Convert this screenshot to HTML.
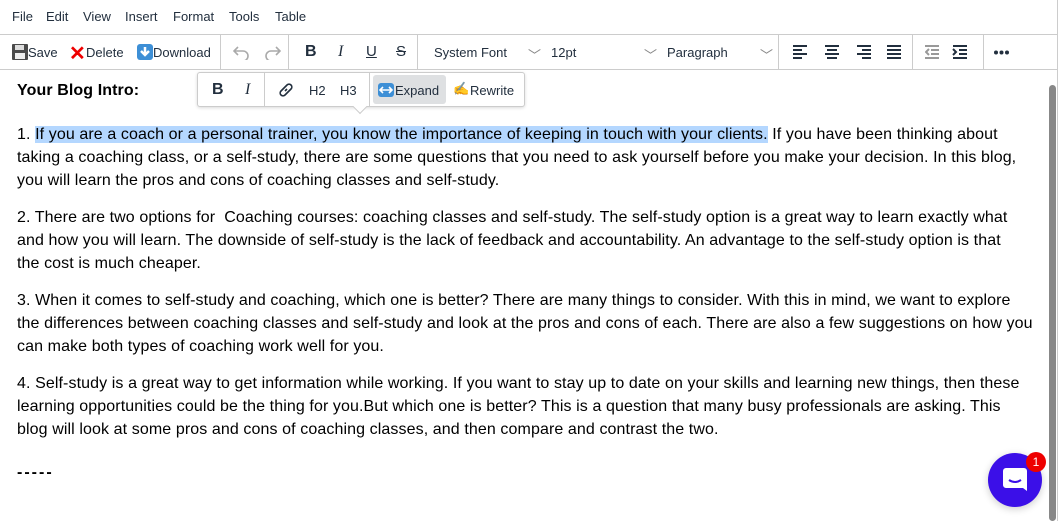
<!DOCTYPE html>
<html><head><style>
*{box-sizing:border-box;margin:0;padding:0}
body{width:1060px;height:521px;overflow:hidden;background:#fff;font-family:"Liberation Sans",Arial,sans-serif;color:#222f3e;position:relative}
.menu{position:absolute;top:0;left:0;width:1058px;height:35px;border-bottom:1px solid #ccc;font-size:13px}
.menu span{position:absolute;top:9px}
.tb{position:absolute;top:35px;left:0;width:1058px;height:35px;border-bottom:1px solid #ccc;font-size:13px}
.tb .t{position:absolute;top:10px}
.sep{position:absolute;top:0;width:1px;height:34px;background:#ccc}
.edge{position:absolute;top:0;right:2px;width:1px;height:521px;background:#ccc}
.content{position:absolute;top:79px;left:17px;width:1030px;font-size:16px;letter-spacing:0.1px;line-height:23px;color:#000;white-space:nowrap}
.content p{margin-bottom:14px}
.hl{background:#b4d7ff}
.pop{position:absolute;left:197px;top:72px;width:328px;height:35px;border:1px solid #ccc;border-radius:3px;background:#fff;box-shadow:0 1px 3px rgba(0,0,0,.15);font-size:13px}
.pop span{position:absolute;top:10px}
.scroll{position:absolute;left:1049px;top:85px;width:7px;height:436px;background:#888;border-radius:4px}
</style></head><body>
<div class="menu">
<span style="left:12px">File</span><span style="left:46px">Edit</span><span style="left:83px">View</span><span style="left:125px">Insert</span><span style="left:173px">Format</span><span style="left:229px">Tools</span><span style="left:275px">Table</span>
</div>
<div class="tb">
<svg style="position:absolute;left:12px;top:9px" width="16" height="16"><rect x="0" y="0" width="16" height="16" rx="1" fill="#4a4a4a"/><rect x="3" y="1" width="9" height="5" fill="#ddd"/><rect x="3" y="9" width="10" height="6" fill="#eee"/></svg>
<span class="t" style="left:28px">Save</span>
<span class="t" style="left:69px;top:6px;color:#e00;font-size:20px;font-weight:bold">✕</span>
<span class="t" style="left:86px">Delete</span>
<svg style="position:absolute;left:137px;top:9px" width="16" height="16"><rect width="16" height="16" rx="3" fill="#3d8fd6"/><path d="M8 3v7M4 7l4 4 4-4" stroke="#fff" stroke-width="2.5" fill="none"/></svg>
<span class="t" style="left:153px">Download</span>
<div class="sep" style="left:220px"></div>
<svg style="position:absolute;left:233px;top:9px" width="18" height="16"><path d="M5 3L1 7l4 4M1 7h9a5 5 0 010 10" stroke="#aaa" stroke-width="1.6" fill="none"/></svg>
<svg style="position:absolute;left:263px;top:9px" width="18" height="16"><path d="M13 3l4 4-4 4M17 7H8a5 5 0 000 10" stroke="#aaa" stroke-width="1.6" fill="none"/></svg>
<div class="sep" style="left:288px"></div>
<span class="t" style="left:305px;font-weight:bold;font-size:16px;top:8px">B</span>
<span class="t" style="left:338px;font-style:italic;font-size:16px;top:8px;font-family:'Liberation Serif',serif">I</span>
<span class="t" style="left:366px;text-decoration:underline;font-size:15px;top:8px">U</span>
<span class="t" style="left:396px;text-decoration:line-through;font-size:15px;top:8px">S</span>
<div class="sep" style="left:417px"></div>
<span class="t" style="left:434px">System Font</span><span class="t" style="left:528px;color:#888">﹀</span>
<span class="t" style="left:551px">12pt</span><span class="t" style="left:644px;color:#888">﹀</span>
<span class="t" style="left:667px">Paragraph</span><span class="t" style="left:760px;color:#888">﹀</span>
<div class="sep" style="left:778px"></div>
<svg style="position:absolute;left:793px;top:10px" width="110" height="14" stroke="#222f3e" stroke-width="2"><path d="M0 1h14M0 5h9M0 9h14M0 13h9"/><path d="M32 1h14M34 5h10M32 9h14M34 13h10"/><path d="M64 1h14M69 5h9M64 9h14M69 13h9"/><path d="M94 1h14M94 5h14M94 9h14M94 13h14"/></svg>
<div class="sep" style="left:912px"></div>
<svg style="position:absolute;left:925px;top:10px" width="50" height="14" stroke-width="2"><path d="M0 1h14M6 5h8M6 9h8M0 13h14M4 4L1 7l3 3" stroke="#999" fill="none"/><path d="M28 1h14M34 5h8M34 9h8M28 13h14M28 4l3 3-3 3" stroke="#222f3e" fill="none"/></svg>
<div class="sep" style="left:983px"></div>
<svg style="position:absolute;left:994px;top:15px" width="16" height="5" fill="#222f3e"><circle cx="2" cy="2.5" r="2"/><circle cx="7.5" cy="2.5" r="2"/><circle cx="13" cy="2.5" r="2"/></svg>
</div>
<div class="edge"></div>
<div class="content">
<p style="font-weight:bold;margin-bottom:21px">Your Blog Intro:</p>
<p>1. <span class="hl">If you are a coach or a personal trainer, you know the importance of keeping in touch with your clients.</span> If you have been thinking about<br>taking a coaching class, or a self-study, there are some questions that you need to ask yourself before you make your decision. In this blog,<br>you will learn the pros and cons of coaching classes and self-study.</p>
<p>2. There are two options for &nbsp;Coaching courses: coaching classes and self-study. The self-study option is a great way to learn exactly what<br>and how you will learn. The downside of self-study is the lack of feedback and accountability. An advantage to the self-study option is that<br>the cost is much cheaper.</p>
<p>3. When it comes to self-study and coaching, which one is better? There are many things to consider. With this in mind, we want to explore<br>the differences between coaching classes and self-study and look at the pros and cons of each. There are also a few suggestions on how you<br>can make both types of coaching work well for you.</p>
<p>4. Self-study is a great way to get information while working. If you want to stay up to date on your skills and learning new things, then these<br>learning opportunities could be the thing for you.But which one is better? This is a question that many busy professionals are asking. This<br>blog will look at some pros and cons of coaching classes, and then compare and contrast the two.</p>
<p style="font-weight:bold;margin-top:20px;letter-spacing:2px">-----</p>
</div>
<div class="pop">
<span style="left:14px;font-weight:bold;font-size:16px;top:8px">B</span>
<span style="left:47px;font-style:italic;font-size:16px;top:8px;font-family:'Liberation Serif',serif">I</span>
<div style="position:absolute;left:66px;top:0;width:1px;height:33px;background:#ccc"></div>
<svg style="position:absolute;left:80px;top:9px" width="16" height="16" stroke="#222f3e" stroke-width="1.6" fill="none"><path d="M7 9l2-2M6 6l3-3a2.5 2.5 0 014 4l-3 3M10 10l-3 3a2.5 2.5 0 01-4-4l3-3"/></svg>
<span style="left:111px">H2</span><span style="left:142px">H3</span>
<div style="position:absolute;left:171px;top:0;width:1px;height:33px;background:#ccc"></div>
<div style="position:absolute;left:175px;top:2px;width:73px;height:29px;background:#dee0e2;border-radius:3px"></div>
<svg style="position:absolute;left:180px;top:10px" width="16" height="14"><rect width="16" height="14" rx="3" fill="#3d8fd6"/><path d="M2 7h12M5 4L2 7l3 3M11 4l3 3-3 3" stroke="#fff" stroke-width="1.6" fill="none"/></svg>
<span style="left:197px">Expand</span>
<span style="left:255px;top:8px;color:#e0a000">✍</span>
<span style="left:272px">Rewrite</span>
</div>
<div style="position:absolute;left:355px;top:102px;width:10px;height:10px;background:#fff;border-right:1px solid #ccc;border-bottom:1px solid #ccc;transform:rotate(45deg)"></div>
<div class="scroll"></div>
<div style="position:absolute;left:988px;top:453px;width:54px;height:54px;border-radius:50%;background:#3b0fe8;box-shadow:0 2px 8px rgba(0,0,0,.2)"></div>
<svg style="position:absolute;left:1003px;top:468px" width="26" height="26"><path d="M3 0h18a3 3 0 013 3v20l-4-3H3a3 3 0 01-3-3V3a3 3 0 013-3z" fill="#fff"/><path d="M6 12q6 4 12 0" stroke="#3b0fe8" stroke-width="2" fill="none"/></svg>
<div style="position:absolute;left:1026px;top:452px;width:20px;height:20px;border-radius:50%;background:#e00;color:#fff;font-size:12px;text-align:center;line-height:20px">1</div>
</body></html>
